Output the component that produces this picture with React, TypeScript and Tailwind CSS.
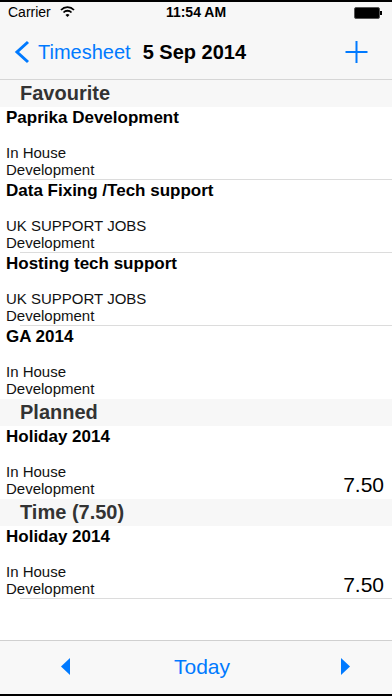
import React from "react";

type Row = { title: string; l1: string; l2: string; value?: string; sep?: boolean };

const RowItem = ({ r }: { r: Row }) => (
  <div className="h-[73px] bg-white flex flex-col pl-[6px] pt-[1px] relative">
    <div className="text-[17px] leading-[20px] font-bold text-black">{r.title}</div>
    <div className="mt-[16px] flex items-end justify-between pr-[8px]">
      <div className="text-[15px] leading-[17px] text-[#111]">
        <div>{r.l1}</div>
        <div>{r.l2}</div>
      </div>
      {r.value && <div className="text-[21px] leading-[24px] text-black">{r.value}</div>}
    </div>
    {r.sep && <div className="absolute left-[20px] right-0 bottom-0 h-px bg-[#dcdcdc]" />}
  </div>
);

const Header = ({ t }: { t: string }) => (
  <div className="h-[27px] bg-[#f7f7f7] pl-[20px] text-[20px] leading-[27px] font-semibold text-[#333]">{t}</div>
);

export default function App() {
  const fav: Row[] = [
    { title: "Paprika Development", l1: "In House", l2: "Development", sep: true },
    { title: "Data Fixing /Tech support", l1: "UK SUPPORT JOBS", l2: "Development", sep: true },
    { title: "Hosting tech support", l1: "UK SUPPORT JOBS", l2: "Development", sep: true },
    { title: "GA 2014", l1: "In House", l2: "Development" },
  ];
  return (
    <div
      className="w-[392px] h-[696px] bg-white flex flex-col overflow-hidden"
      style={{ fontFamily: '"Liberation Sans", Arial, sans-serif' }}
    >
      <div className="h-[2px] bg-black" />
      {/* status + nav */}
      <div className="bg-[#f7f7f7] border-b border-[#d6d6d6]">
        <div className="h-[18px] grid grid-cols-3 items-center px-[8px] pt-[1px]">
          <div className="flex items-center gap-[9px]">
            <span className="text-[14px] leading-[16px] text-black">Carrier</span>
            <svg width="15" height="11" viewBox="0 0 15 11">
              <path d="M1 4 A9 9 0 0 1 14 4" stroke="#000" strokeWidth="1.8" fill="none" />
              <path d="M3.5 6.5 A5.5 5.5 0 0 1 11.5 6.5" stroke="#000" strokeWidth="1.8" fill="none" />
              <path d="M5.5 9 L7.5 11 L9.5 9 A3 3 0 0 0 5.5 9 Z" fill="#000" />
            </svg>
          </div>
          <span className="text-center text-[14px] leading-[16px] font-bold text-black">11:54 AM</span>
          <div className="flex items-center justify-end pr-[2px] pt-[2px]">
            <div className="w-[26px] h-[12px] rounded-[2px] border border-[#555] bg-black" />
            <div className="w-[2px] h-[4px] bg-black" />
          </div>
        </div>
        <div className="h-[59px] flex items-center pl-[14px] pr-[24px] pt-[4px]">
          <svg width="16" height="24" viewBox="0 0 16 24">
            <path d="M14 2 L3 12 L14 22" stroke="#007aff" strokeWidth="3" fill="none" />
          </svg>
          <span className="ml-[8px] text-[20px] leading-[22px] text-[#007aff]">Timesheet</span>
          <span className="ml-[12px] text-[20px] leading-[22px] font-bold text-black">5 Sep 2014</span>
          <svg className="ml-auto" width="23" height="22" viewBox="0 0 23 22">
            <path d="M11.5 0 V22 M0.5 11 H22.5" stroke="#007aff" strokeWidth="2" />
          </svg>
        </div>
      </div>
      {/* list */}
      <div className="flex-1 flex flex-col">
        <Header t="Favourite" />
        {fav.map((r, i) => (
          <RowItem key={i} r={r} />
        ))}
        <Header t="Planned" />
        <RowItem r={{ title: "Holiday 2014", l1: "In House", l2: "Development", value: "7.50" }} />
        <Header t="Time (7.50)" />
        <RowItem r={{ title: "Holiday 2014", l1: "In House", l2: "Development", value: "7.50", sep: true }} />
      </div>
      {/* toolbar */}
      <div className="h-[54px] bg-[#f8f8f8] border-t border-[#d0d0d0] flex items-center pl-[61px] pr-[42px] pb-[2px]">
        <svg width="9" height="17" viewBox="0 0 9 17">
          <path d="M9 0 L0 8.5 L9 17 Z" fill="#007aff" />
        </svg>
        <span className="flex-1 text-center pr-[7px] text-[21px] leading-[24px] text-[#007aff]">Today</span>
        <svg width="9" height="17" viewBox="0 0 9 17">
          <path d="M0 0 L9 8.5 L0 17 Z" fill="#007aff" />
        </svg>
      </div>
      <div className="h-[2px] bg-black" />
    </div>
  );
}
